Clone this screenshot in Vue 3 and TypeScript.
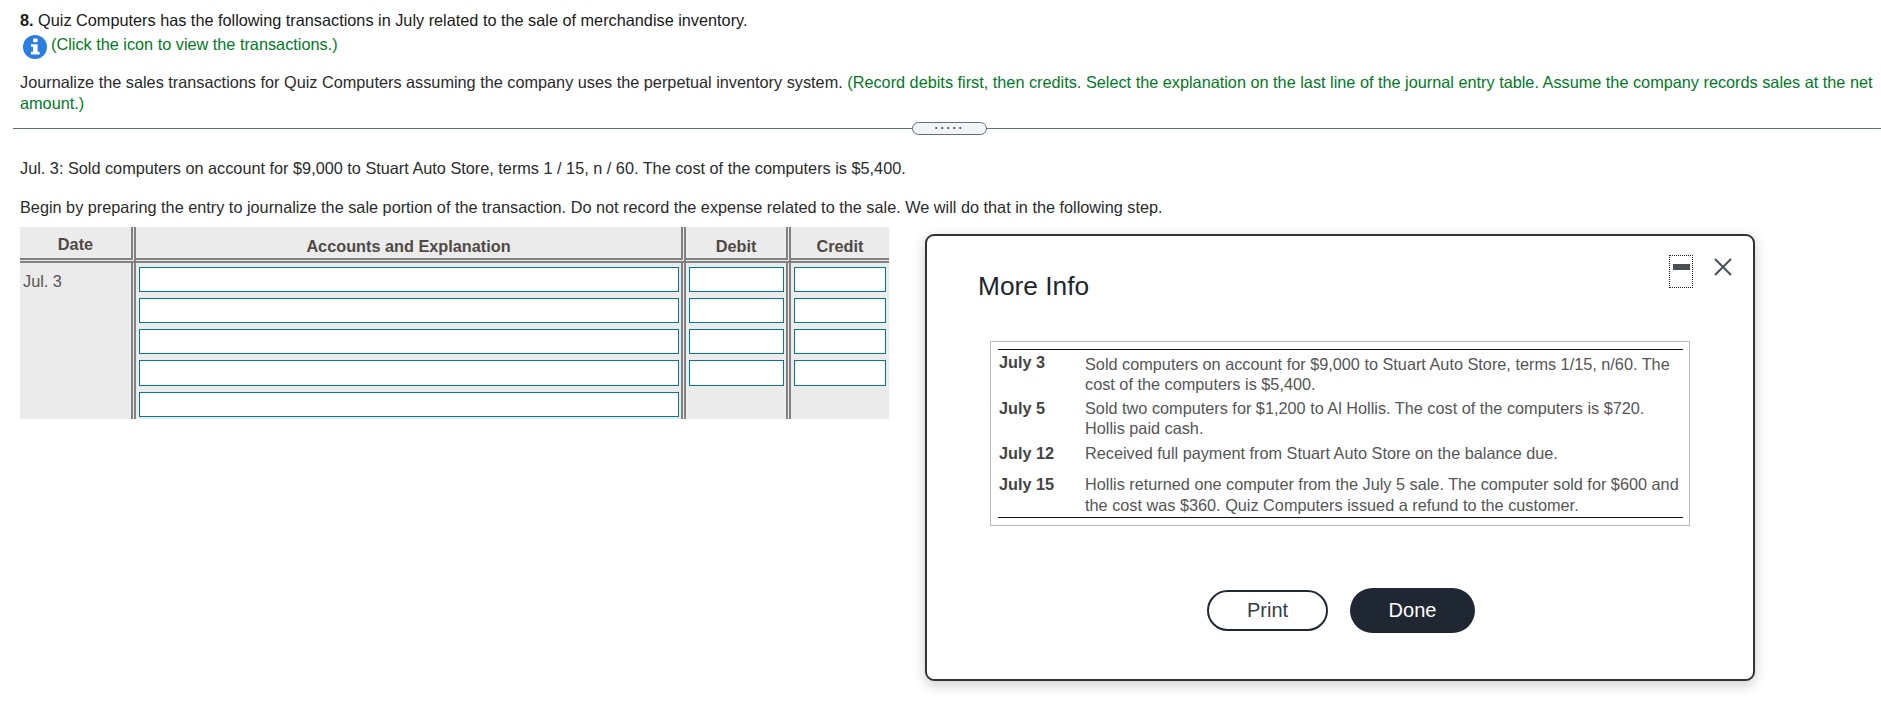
<script setup lang="ts">
const rows = [0, 1, 2, 3]
const items = [
  { d: 'July 3', t: 'Sold computers on account for $9,000 to Stuart Auto Store, terms 1/15, n/60. The cost of the computers is $5,400.' },
  { d: 'July 5', t: 'Sold two computers for $1,200 to Al Hollis. The cost of the computers is $720. Hollis paid cash.' },
  { d: 'July 12', t: 'Received full payment from Stuart Auto Store on the balance due.' },
  { d: 'July 15', t: 'Hollis returned one computer from the July 5 sale. The computer sold for $600 and the cost was $360. Quiz Computers issued a refund to the customer.' },
]
</script>

<template>
  <div class="page">
    <div class="intro">
      <p class="line"><b>8.</b> Quiz Computers has the following transactions in July related to the sale of merchandise inventory.</p>
      <p class="hint">
        <svg class="info" viewBox="0 0 24 24" width="24" height="24">
          <circle cx="12" cy="12" r="12" fill="#2a7de1" />
          <rect x="10" y="3.6" width="4.6" height="3.6" rx="1" fill="#fff" />
          <path d="M8 9.2h6.6v7.6h2v2.6H8v-2.6h2v-5H8z" fill="#fff" />
        </svg>
        <span class="green hint-text">(Click the icon to view the transactions.)</span>
      </p>
      <p class="para">Journalize the sales transactions for Quiz Computers assuming the company uses the perpetual inventory system. <span class="green">(Record debits first, then credits. Select the explanation on the last line of the journal entry table. Assume the company records sales at the net amount.)</span></p>
    </div>

    <div class="divider"><span class="pill">·····</span></div>

    <p class="jul">Jul. 3: Sold computers on account for $9,000 to Stuart Auto Store, terms 1 / 15, n / 60. The cost of the computers is $5,400.</p>
    <p class="begin">Begin by preparing the entry to journalize the sale portion of the transaction. Do not record the expense related to the sale. We will do that in the following step.</p>

    <div class="journal">
      <div class="cell head date-h">Date</div>
      <div class="cell head">Accounts and Explanation</div>
      <div class="cell head">Debit</div>
      <div class="cell head last">Credit</div>
      <div class="cell body date-b">Jul. 3</div>
      <div class="cell body stack">
        <input v-for="r in [0, 1, 2, 3, 4]" :key="r" class="box" type="text" />
      </div>
      <div class="cell body stack">
        <input v-for="r in rows" :key="r" class="box" type="text" />
      </div>
      <div class="cell body stack last">
        <input v-for="r in rows" :key="r" class="box" type="text" />
      </div>
    </div>

    <section class="modal">
      <div class="controls">
        <span class="min"><i></i></span>
        <svg class="close" viewBox="0 0 18 18" width="18" height="18">
          <path d="M1 1l16 16M17 1L1 17" stroke="#44505c" stroke-width="2" fill="none" />
        </svg>
      </div>
      <h2 class="title">More Info</h2>
      <div class="frame">
        <div class="tx">
          <div v-for="it in items" :key="it.d" class="tx-row">
            <b class="tx-date">{{ it.d }}</b>
            <span class="tx-text">{{ it.t }}</span>
          </div>
        </div>
      </div>
      <div class="actions">
        <button class="btn print">Print</button>
        <button class="btn done">Done</button>
      </div>
    </section>
  </div>
</template>

<style>
html, body { margin: 0; background: #fff; }
</style>

<style scoped>
.page {
  position: relative;
  width: 1881px;
  height: 711px;
  overflow: hidden;
  font-family: "Liberation Sans", Arial, sans-serif;
  font-size: 16.27px;
  color: #2b2b2b;
}
p { margin: 0; }
.intro { padding: 10px 8px 0 20px; }
.line { line-height: 21px; color: #1a1a1a; }
.hint { display: flex; align-items: center; gap: 4px; margin: 4px 0 0 3px; height: 24px; }
.info { flex: none; }
.hint-text { margin-bottom: 6px; }
.green { color: #007a1f; }
.para { margin-top: 13px; line-height: 21px; }
.divider {
  position: relative;
  margin: 14px 0 0 13px;
  height: 1px;
  background: #5f6f7f;
}
.pill {
  position: absolute;
  left: 899px;
  top: -6px;
  width: 73px;
  height: 11px;
  border: 1px solid #5f6f7f;
  border-radius: 7px;
  background: #f2f4f7;
  text-align: center;
  font-size: 12px;
  line-height: 11px;
  letter-spacing: 2px;
  font-weight: bold;
  color: #44505c;
}
.jul { margin: 29px 0 0 20px; line-height: 21px; }
.begin { margin: 18px 0 0 20px; line-height: 21px; }
.journal {
  margin: 9px 0 0 20px;
  width: 869px;
  display: grid;
  grid-template-columns: 116px 550px 105px 98px;
  background: #ebebeb;
}
.cell { border-right: 5px double #808080; box-sizing: border-box; }
.cell.last { border-right: 0; }
.head {
  height: 36px;
  border-bottom: 5px double #808080;
  text-align: center;
  font-weight: bold;
  color: #4f4a45;
  line-height: 38px;
}
.date-h { line-height: 34px; }
.body { height: 156px; }
.date-b { padding: 8px 0 0 3px; color: #555; line-height: 20px; }
.stack {
  display: flex;
  flex-direction: column;
  gap: 6px;
  padding: 4px 2px 0 3px;
}
.stack.last { padding-right: 3px; }
.box {
  display: block;
  flex: none;
  box-sizing: border-box;
  width: 100%;
  height: 25px;
  margin: 0;
  padding: 0;
  border: 1px solid #007a99;
  border-radius: 0;
  background: #fff;
}
.box:nth-child(4) { height: 26px; }
.modal {
  position: absolute;
  left: 925px;
  top: 234px;
  width: 830px;
  height: 447px;
  box-sizing: border-box;
  border: 2px solid #333;
  border-radius: 9px;
  background: #fff;
  box-shadow: 0 4px 14px rgba(0, 0, 0, 0.2);
}
.controls { position: absolute; top: 19px; right: 21px; display: flex; align-items: flex-start; gap: 21px; }
.min {
  width: 24px;
  height: 33px;
  box-sizing: border-box;
  border: 1px dotted #222;
  display: flex;
  align-items: center;
  justify-content: center;
}
.min i { display: block; width: 17px; height: 6px; background: #4b4f54; margin-top: -10px; }
.close { margin-top: 3px; }
.title {
  margin: 34px 0 0 51px;
  font-size: 26.3px;
  font-weight: normal;
  line-height: 32px;
  color: #1d2530;
}
.frame {
  margin: 39px 0 0 63px;
  width: 700px;
  height: 185px;
  box-sizing: border-box;
  border: 1px solid #b8b8b8;
  padding: 7px 6px 7px 7px;
}
.tx {
  border-top: 1px solid #111;
  border-bottom: 1px solid #111;
  padding-top: 4px;
  height: 169px;
  box-sizing: border-box;
}
.tx-row { display: flex; line-height: 20px; margin-bottom: 4px; }
.tx-row:nth-child(2) { margin-bottom: 5px; }
.tx-row:nth-child(3) { margin-bottom: 11px; }
.tx-row:nth-child(4) { line-height: 21px; margin-bottom: 0; }
.tx-date { flex: none; width: 87px; padding-left: 1px; box-sizing: border-box; color: #444; line-height: 20px; }
.tx-row:first-child .tx-date { line-height: 16px; }
.tx-text { color: #555; }
.actions { position: absolute; left: 280px; top: 352px; display: flex; align-items: center; gap: 22px; }
.btn {
  font-family: "Liberation Sans", Arial, sans-serif;
  font-size: 20px;
  border-radius: 23px;
  box-sizing: border-box;
  padding: 0;
}
.print { width: 121px; height: 41px; border: 2px solid #1f2733; background: #fff; color: #333d4a; }
.done { width: 125px; height: 45px; border: 0; background: #1f2733; color: #fff; }
</style>
